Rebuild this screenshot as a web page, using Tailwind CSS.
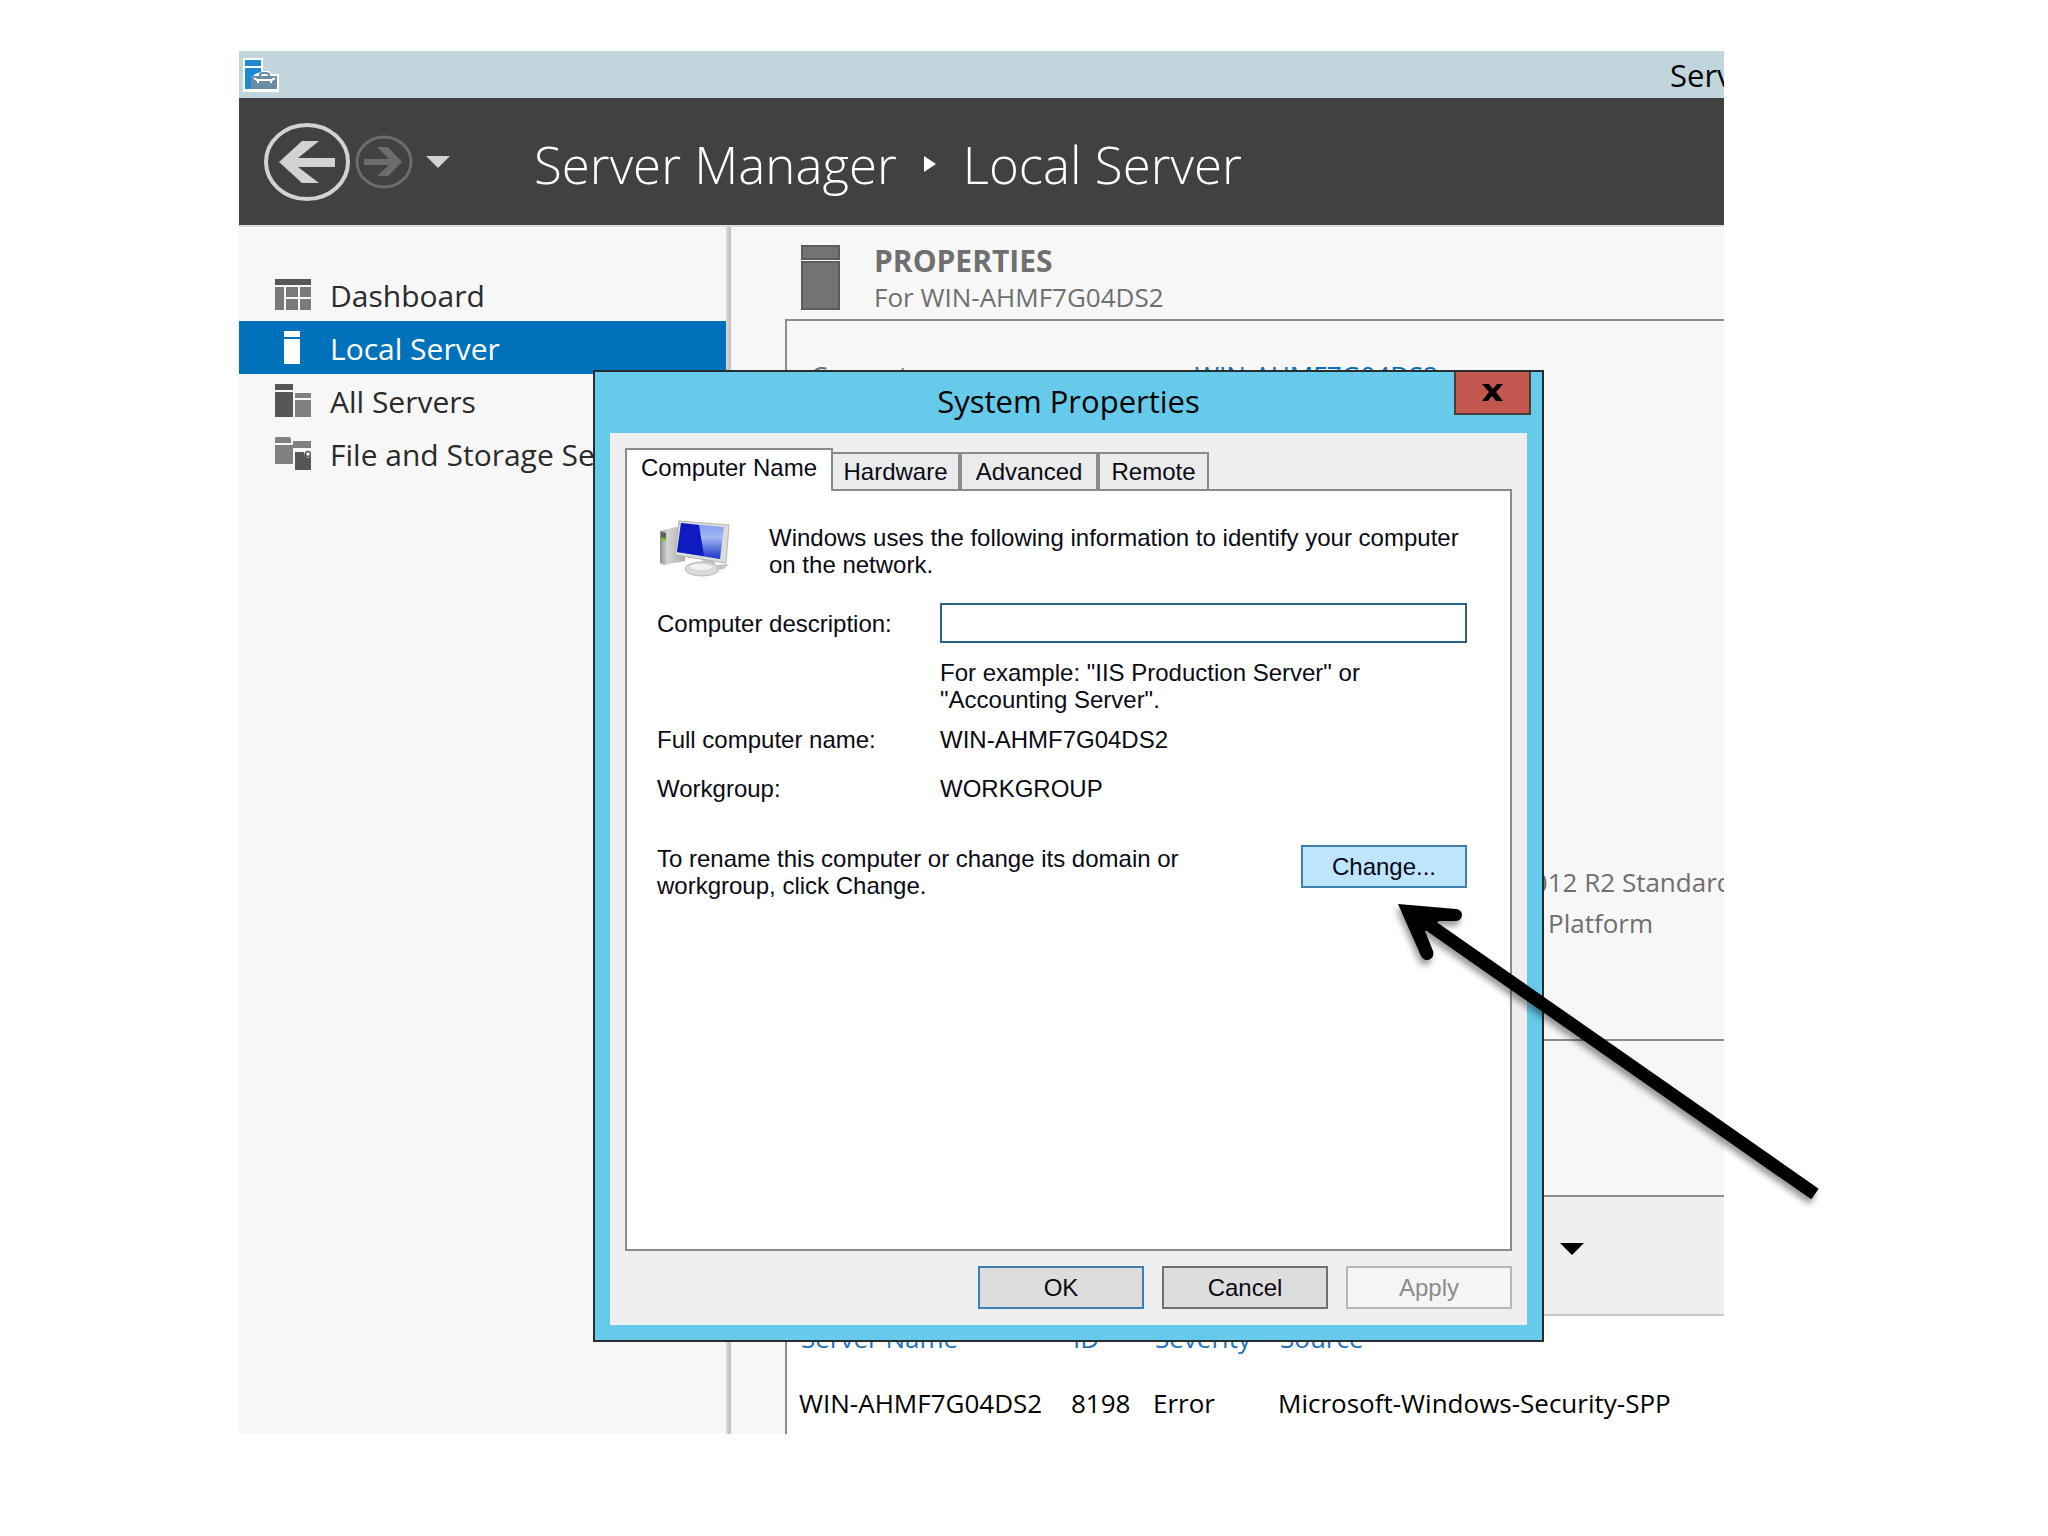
<!DOCTYPE html>
<html lang="en">
<head>
    <meta charset="UTF-8">
    <meta name="viewport" content="width=device-width, initial-scale=1.0">
    <title>Server Manager</title>
    <script src="https://cdn.jsdelivr.net/npm/@tailwindcss/browser@4"></script>
</head>
<body class="bg-white font-['Open_Sans','Noto_Sans',sans-serif]">
    <div class="relative mt-[51px] mr-[324px] mb-[102px] ml-[239px]">
        <!-- Server Manager window -->
        <div class="overflow-hidden bg-[#f7f7f7]">
            <div class="flex h-[47px] items-center justify-between bg-[#c1d5dc] pl-1">
                <svg class="h-9 w-9" viewBox="0 0 36 36">
                    <path fill="#fff" d="M0 1h20v13h6l3 3h7v18H0z" />
                    <path fill="#1e8ad6" d="M2 3h16v6H2zM2 11h16v4l-6 2-4 4v11H2z" />
                    <path fill="none" stroke="#6c8ba4" stroke-width="2" d="M17 20v-3l2-1h5l2 1v3" />
                    <path fill="#6c8ba4" d="M10 19h24v13H8V21z" />
                    <path fill="none" stroke="#fff" stroke-width="2" d="M11 21l3 2h15l3-2M15 23v3M28 23v3" />
                </svg>
                <span class="w-[54px] overflow-hidden text-[31px] leading-[46px] whitespace-nowrap text-black">Server</span>
            </div>

            <header class="flex h-[127px] items-center bg-[#414141] pl-6">
                <button aria-label="Back">
                    <svg class="block h-20 w-[88px]" viewBox="0 0 88 80">
                        <ellipse cx="44" cy="40" rx="41" ry="37" fill="none" stroke="#d2d2d2" stroke-width="4" />
                        <path fill="#d2d2d2" d="M16 40l23-21h17L35 36h37v9H35l21 16H39z" />
                    </svg>
                </button>
                <button aria-label="Forward" class="ml-[3px]">
                    <svg class="block h-14 w-[60px]" viewBox="0 0 60 56">
                        <ellipse cx="30" cy="28" rx="27" ry="25" fill="none" stroke="#6c6c6c" stroke-width="3" />
                        <path fill="#6c6c6c" d="M48 28L34 42H23l12-11H10v-6h25L23 13h11z" />
                    </svg>
                </button>
                <button aria-label="History" class="ml-3">
                    <svg class="block h-3 w-6" viewBox="0 0 24 12"><path fill="#d2d2d2" d="M0 0h24L12 12z" /></svg>
                </button>
                <nav class="ml-[84px] flex items-center pt-1 text-[51px] leading-[66px] font-light whitespace-nowrap text-white">
                    <span>Server Manager</span>
                    <svg class="mx-[27px] h-4 w-3" viewBox="0 0 12 16"><path fill="#fff" d="M0 0l12 8L0 16z" /></svg>
                    <span>Local Server</span>
                </nav>
            </header>

            <div class="flex border-t-2 border-[#dcdcdc]">
                <aside class="w-[487px] shrink-0 pt-[41px] text-[30px] text-[#2b2b2b]">
                    <a href="#" class="flex h-[53px] items-center pl-9">
                        <svg class="h-[31px] w-9" viewBox="0 0 36 31">
                            <path fill="#565656" d="M0 0h36v6H0z" />
                            <path fill="#7a7a7a" d="M0 8h9v23H0zM11 8h12v10H11zM25 8h11v10H25zM11 20h12v11H11zM25 20h11v11H25z" />
                        </svg>
                        <span class="ml-[19px] pt-[2px]">Dashboard</span>
                    </a>
                    <a href="#" class="flex h-[53px] items-center bg-[#0072bc] pl-9 text-white">
                        <svg class="h-[33px] w-9" viewBox="0 0 36 33">
                            <path fill="#fff" d="M9 0h16v6H9zM9 8h16v25H9z" />
                        </svg>
                        <span class="ml-[19px] pt-[2px]">Local Server</span>
                    </a>
                    <a href="#" class="flex h-[53px] items-center pl-9">
                        <svg class="h-[33px] w-9" viewBox="0 0 36 33">
                            <path fill="#565656" d="M0 0h18v6H0zM0 8h18v25H0z" />
                            <path fill="#808080" d="M20 9h16v5H20zM20 16h16v17H20z" />
                        </svg>
                        <span class="ml-[19px] pt-[2px]">All Servers</span>
                    </a>
                    <a href="#" class="flex h-[53px] items-center pl-9 whitespace-nowrap">
                        <svg class="h-[33px] w-9" viewBox="0 0 36 33">
                            <path fill="#808080" d="M1 0h14l1 2v4H0V1zM18 4h18v7H18v16H0V8h18z" />
                            <path fill="#565656" d="M20 15h9l1 4 3 2 3-2v14H20z" />
                            <circle cx="33" cy="17" r="2.500" fill="none" stroke="#565656" stroke-width="1.500" />
                        </svg>
                        <span class="ml-[19px] pt-[2px]">File and Storage Se</span>
                    </a>
                </aside>
                <div class="w-[5px] shrink-0 bg-linear-to-r from-[#dadada] to-[#bebebe]"></div>

                <main class="min-w-0 flex-1 text-[26px] leading-9 text-[#6f6f6f]">
                    <div class="flex gap-[34px] pt-4 pb-1 pl-[70px]">
                        <svg class="mt-[2px] h-[65px] w-[39px]" viewBox="0 0 39 65">
                            <path fill="#737373" stroke="#5c5c5c" stroke-width="2" d="M1 1h37v13H1zM1 17h37v47H1z" />
                        </svg>
                        <div>
                            <h1 class="text-[30px] leading-9 font-bold">PROPERTIES</h1>
                            <p>For WIN-AHMF7G04DS2</p>
                        </div>
                    </div>

                    <section class="ml-[54px] flex h-[722px] flex-col justify-between border-y-2 border-l-2 border-[#8c8c8c] pt-9 pb-[95px]">
                        <div class="flex pl-6">
                            <span class="w-[384px]">Computer name</span>
                            <a href="#" class="text-[#0a6cb8]">WIN-AHMF7G04DS2</a>
                        </div>
                        <div class="ml-auto w-[206px] overflow-hidden leading-[41px] whitespace-nowrap">
                            <p>2012 R2 Standard</p>
                            <p class="pl-[30px]">Platform</p>
                        </div>
                    </section>

                    <section class="mt-[154px] ml-[54px] border-t-2 border-l-2 border-[#8c8c8c] bg-white">
                        <div class="flex h-[119px] items-center justify-end border-b-2 border-[#c6c6c6] bg-[#efefef] pr-[140px] pb-[14px]">
                            <button aria-label="More">
                                <svg class="block h-3 w-6" viewBox="0 0 24 12"><path fill="#000" d="M0 0h24L12 12z" /></svg>
                            </button>
                        </div>
                        <table class="w-full table-fixed text-left whitespace-nowrap">
                            <thead class="text-[#1f74bd]">
                                <tr class="h-[69px] align-top">
                                    <th class="w-[284px] pt-1 pl-[14px] font-normal">Server Name</th>
                                    <th class="w-[82px] pt-1 pl-[2px] font-normal">ID</th>
                                    <th class="w-[125px] pt-1 pl-[2px] font-normal">Severity</th>
                                    <th class="pt-1 pl-[2px] font-normal">Source</th>
                                </tr>
                            </thead>
                            <tbody class="text-black">
                                <tr class="h-[49px] align-top">
                                    <td class="pl-3">WIN-AHMF7G04DS2</td>
                                    <td>8198</td>
                                    <td>Error</td>
                                    <td>Microsoft-Windows-Security-SPP</td>
                                </tr>
                            </tbody>
                        </table>
                    </section>
                </main>
            </div>
        </div>

        <!-- System Properties dialog -->
        <div role="dialog" aria-labelledby="dialog-title" class="absolute top-[319px] right-[180px] left-[354px] border-2 border-[#262d30] bg-[#66cbea] px-[15px] pb-[15px]">
            <h2 id="dialog-title" class="mb-[2px] text-center text-[31px] leading-[59px] text-black">System Properties</h2>
            <button aria-label="Close" class="absolute top-0 right-[11px] flex h-[43px] w-[77px] items-center justify-center border-2 border-t-0 border-[#4a3b3c] bg-[#c2574d]">
                <svg class="h-[17px] w-[21px]" viewBox="0 0 21 17"><path fill="#000" d="M0 0h7l4 5 4-5h6l-7 8 7 9h-7l-4-5-4 5H0l7-9z" /></svg>
            </button>

            <div class="bg-[#efefef] px-[15px] pt-[15px] pb-4 font-['Liberation_Sans',Arial,sans-serif] text-[24px] leading-[27px] text-[#0a0a14]">
                <div role="tablist" class="relative z-10 -mb-[2px] flex items-end">
                    <button role="tab" aria-selected="true" class="h-[43px] w-[208px] border-2 border-b-0 border-[#8a8a8e] bg-white pb-[6px]">Computer Name</button>
                    <button role="tab" class="h-[39px] w-[127px] border-2 border-l-0 border-[#8a8a8e] bg-[#ebebeb]">Hardware</button>
                    <button role="tab" class="h-[39px] w-[138px] border-2 border-[#8a8a8e] bg-[#ebebeb]">Advanced</button>
                    <button role="tab" class="h-[39px] w-[111px] border-2 border-[#8a8a8e] bg-[#ebebeb]">Remote</button>
                </div>

                <div role="tabpanel" class="h-[762px] border-2 border-[#8a8a8e] bg-white pt-[33px] pr-[43px] pl-[30px]">
                    <div class="flex">
                        <svg class="-mt-1 h-[58px] w-[112px] shrink-0" viewBox="0 0 112 58">
                            <defs>
                                <linearGradient id="screen" x1="0" y1="0" x2="0" y2="1">
                                    <stop offset="0" stop-color="#7f9cf2" />
                                    <stop offset="0.400" stop-color="#a3b8f6" />
                                    <stop offset="1" stop-color="#1b33c8" />
                                </linearGradient>
                                <linearGradient id="tower" x1="0" x2="1">
                                    <stop offset="0" stop-color="#8d8d8d" />
                                    <stop offset="0.300" stop-color="#d6d6d6" />
                                    <stop offset="1" stop-color="#a9a9a9" />
                                </linearGradient>
                            </defs>
                            <path fill="url(#tower)" d="M3 11l16-4 9 3v31L7 45l-4-2z" />
                            <path fill="#5f625c" d="M4 12l5 1v6l-5-1z" />
                            <path fill="#69c21f" d="M5 17l4 1v3l-4-1z" />
                            <path fill="#c9c9c9" d="M46 38l12 2v7H44z" />
                            <ellipse cx="45" cy="49" rx="17" ry="7" fill="#dadada" stroke="#b9b9b9" />
                            <ellipse cx="44" cy="47" rx="11" ry="3" fill="#f1f1f1" />
                            <path fill="#c6c6c6" d="M60 45l12-1-5 5-8 1z" />
                            <path fill="#dcdcd8" stroke="#b4b4ae" d="M22 1l50 4-3 38-51-8z" />
                            <path fill="url(#screen)" d="M24 3l43 4-4 32-43-7z" />
                            <path fill="#0d1bc0" d="M24 3l18 2 5 31-27-4z" />
                        </svg>
                        <p>Windows uses the following information to identify your computer<br>on the network.</p>
                    </div>

                    <div class="mt-[25px] flex items-center">
                        <label for="description" class="w-[283px] shrink-0">Computer description:</label>
                        <input id="description" type="text" class="h-10 min-w-0 flex-1 border-2 border-[#2c6288] bg-white px-2 outline-none">
                    </div>
                    <p class="mt-4 ml-[283px]">For example: "IIS Production Server" or<br>"Accounting Server".</p>

                    <dl>
                        <div class="mt-[13px] flex">
                            <dt class="w-[283px]">Full computer name:</dt>
                            <dd>WIN-AHMF7G04DS2</dd>
                        </div>
                        <div class="mt-[22px] flex">
                            <dt class="w-[283px]">Workgroup:</dt>
                            <dd>WORKGROUP</dd>
                        </div>
                    </dl>

                    <div class="mt-[43px] flex items-start justify-between">
                        <p>To rename this computer or change its domain or<br>workgroup, click Change.</p>
                        <button class="h-[43px] w-[166px] border-2 border-[#3f80ae] bg-[#bde5fd]">Change...</button>
                    </div>
                </div>

                <div class="mt-[15px] flex justify-end gap-[18px]">
                    <button class="h-[43px] w-[166px] border-2 border-[#3f80b4] bg-[#dddddd]">OK</button>
                    <button class="h-[43px] w-[166px] border-2 border-[#707070] bg-[#dddddd]">Cancel</button>
                    <button disabled class="h-[43px] w-[166px] border-2 border-[#b4b8ba] bg-[#f5f5f5] text-[#8c8c8c]">Apply</button>
                </div>
            </div>
        </div>

        <!-- Arrow pointing at the Change button -->
        <svg class="pointer-events-none absolute top-[849px] -right-[104px] h-[320px] w-[440px] drop-shadow-[-2px_5px_3px_rgba(0,0,0,0.4)]" viewBox="0 0 440 320">
            <path stroke="#000" stroke-width="13" d="M30 17L427 294" />
            <path fill="#000" d="M10 4l58 5a6 6 0 0 1 0 12l-17 0-14 10 8 20a6 6 0 0 1-12 5z" />
        </svg>
    </div>
</body>
</html>
